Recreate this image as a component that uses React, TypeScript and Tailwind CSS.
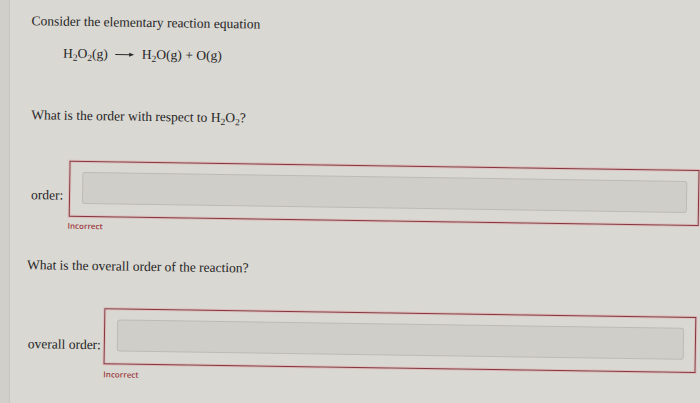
import React from "react";

const serif = { fontFamily: '"Liberation Serif", "Times New Roman", serif' };
const sans = { fontFamily: '"Open Sans", "Liberation Sans", sans-serif' };

function Sub({ children }: { children: React.ReactNode }) {
  return (
    <span className="relative top-[3px] text-[9.5px] leading-none">{children}</span>
  );
}

function Arrow() {
  return (
    <svg width="20" height="8" viewBox="0 0 20 8" className="mx-[7px] inline-block">
      <line x1="0" y1="4" x2="16" y2="4" stroke="#2b2b2b" strokeWidth="1" />
      <path d="M14 2 L19 4 L14 6 Z" fill="#2b2b2b" />
    </svg>
  );
}

function AnswerBox({ width }: { width: string }) {
  return (
    <div
      className={`${width} h-[56px] border-[1.5px] border-[#86353c] shadow-[0_0_0_1px_rgba(225,150,155,0.45),inset_0_0_0_1px_rgba(225,150,155,0.35)] pt-[10px] pl-[12px] pr-[11px]`}
    >
      <div className="h-[32px] rounded-[3px] bg-[#d0cec8] border border-[#bdbbb5]" />
    </div>
  );
}

export default function App() {
  return (
    <div className="flex w-[700px] h-[403px] overflow-hidden bg-[#dad8d3]">
      <div className="w-[10px] h-full bg-[#d1cfc9] border-r border-[#c6c4be]" />
      <div className="flex-1 h-full overflow-hidden bg-[#dad8d3]">
        <div
          className="rotate-[0.85deg] origin-center w-full h-full text-[#262626] text-[13.5px]"
          style={serif}
        >
          <div className="pt-[18px] pl-[19px] leading-[16px]">
            Consider the elementary reaction equation
          </div>
          <div className="mt-[16px] pl-[51px] leading-[16px] text-[13.5px] flex items-center whitespace-nowrap">
            <span>
              H<Sub>2</Sub>O<Sub>2</Sub>(g)
            </span>
            <Arrow />
            <span className="whitespace-pre">
              H<Sub>2</Sub>O(g) + O(g)
            </span>
          </div>
          <div className="mt-[46px] pl-[20px] leading-[16px]">
            What is the order with respect to H<Sub>2</Sub>O<Sub>2</Sub>?
          </div>

          <div className="mt-[37px] pl-[21px] flex items-start">
            <div className="w-[38px] mt-[27px] leading-[16px]">order:</div>
            <AnswerBox width="w-[630px]" />
          </div>
          <div
            className="mt-[4px] pl-[58px] text-[8px] leading-[10px] font-semibold text-[#9b3a40]"
            style={sans}
          >
            Incorrect
          </div>

          <div className="mt-[27px] pl-[18px] leading-[16px]">
            What is the overall order of the reaction?
          </div>

          <div className="mt-[34px] pl-[20px] flex items-start">
            <div className="w-[76px] mt-[29px] leading-[16px] whitespace-nowrap">overall order:</div>
            <AnswerBox width="w-[592px]" />
          </div>
          <div
            className="mt-[5px] pl-[96px] text-[8px] leading-[10px] font-semibold text-[#9b3a40]"
            style={sans}
          >
            Incorrect
          </div>
        </div>
      </div>
    </div>
  );
}
